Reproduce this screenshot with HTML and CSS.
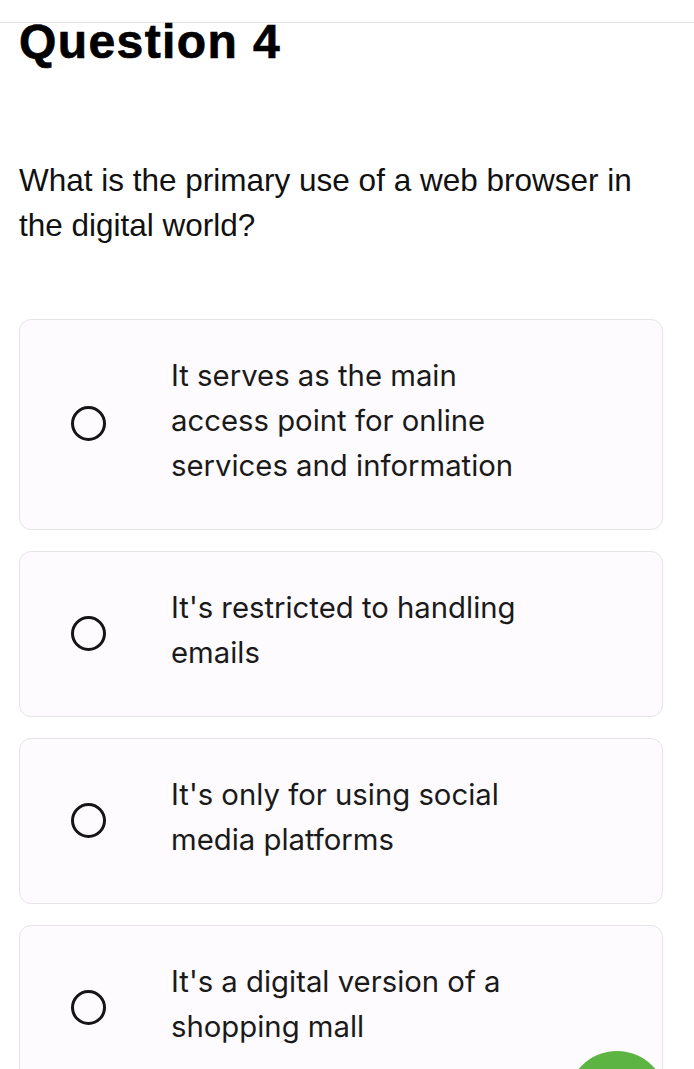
FILE: index.html
```html
<!DOCTYPE html>
<html lang="en">
<head>
<meta charset="utf-8">
<title>Question 4</title>
<link rel="stylesheet" href="styles.css">
</head>
<body>
<div class="topbar"></div>
<main class="page">
  <h1 class="title">Question 4</h1>
  <p class="question">What is the primary use of a web browser in the digital world?</p>
  <div class="options">
    <div class="option">
      <span class="radio"></span>
      <span class="label">It serves as the main access point for online services and information</span>
    </div>
    <div class="option">
      <span class="radio"></span>
      <span class="label">It's restricted to handling emails</span>
    </div>
    <div class="option">
      <span class="radio"></span>
      <span class="label">It's only for using social media platforms</span>
    </div>
    <div class="option">
      <span class="radio"></span>
      <span class="label">It's a digital version of a shopping mall</span>
    </div>
  </div>
</main>
<div class="fab"></div>
</body>
</html>
```

FILE: styles.css
```css
html, body {
  margin: 0;
  padding: 0;
  background: #ffffff;
}
body {
  position: relative;
  height: 1069px;
  overflow: hidden;
  font-family: "Liberation Sans", Arial, sans-serif;
  color: #111111;
}
.topbar {
  height: 22px;
  border-bottom: 1px solid #e3e3e3;
}
.page {
  padding: 0 31px 0 19px;
}
.title {
  margin: -5px 0 0 0;
  font-family: "Liberation Sans", Arial, sans-serif;
  font-weight: 700;
  font-size: 48px;
  line-height: 48px;
  letter-spacing: 1.4px;
  color: #000000;
  -webkit-text-stroke: 0.7px #000000;
}
.question {
  margin: 92px 0 0 0;
  font-size: 31.5px;
  line-height: 45px;
  color: #111111;
}
.options {
  margin-top: 71px;
  display: flex;
  flex-direction: column;
  gap: 21px;
}
.option {
  display: flex;
  align-items: center;
  padding: 33px 20px 41px 51px;
  background: #fdfbfe;
  border: 1px solid #e6e4e6;
  border-radius: 12px;
}
.radio {
  flex: none;
  width: 29px;
  height: 29px;
  border: 3.5px solid #151515;
  border-radius: 50%;
  margin-right: 65px;
  position: relative;
  top: 3px;
}
.label {
  font-family: "Inter", "Liberation Sans", sans-serif;
  font-size: 29.3px;
  line-height: 45px;
  color: #1a1a1a;
  max-width: 370px;
}
.fab {
  position: absolute;
  left: 567px;
  top: 1051px;
  width: 100px;
  height: 100px;
  border-radius: 50%;
  background: #5cb443;
}
```
